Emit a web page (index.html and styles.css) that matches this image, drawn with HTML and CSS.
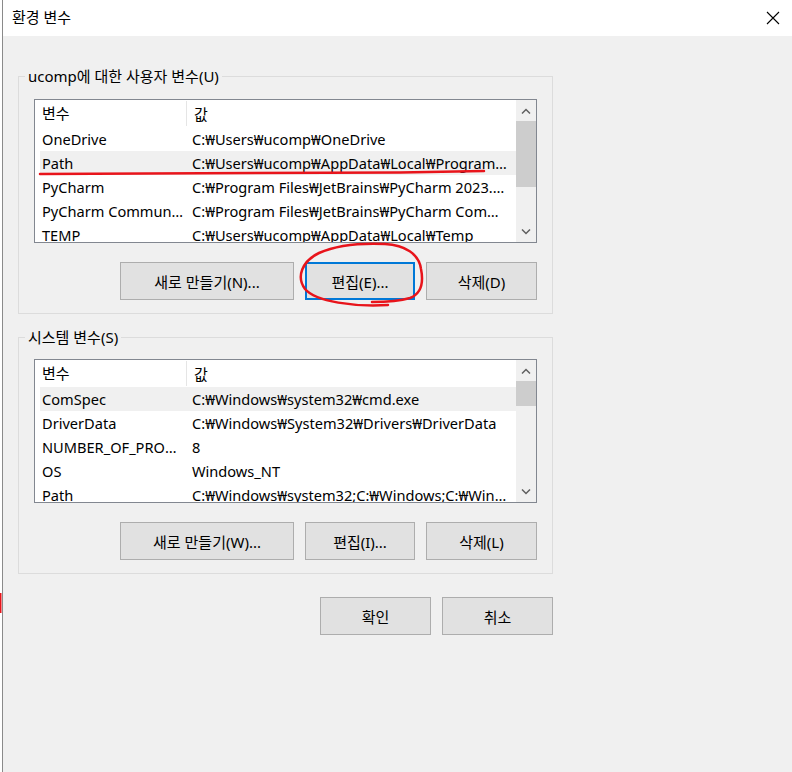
FILE: index.html
```html
<!DOCTYPE html>
<html lang="ko">
<head>
<meta charset="utf-8">
<title>환경 변수</title>
<link rel="stylesheet" href="styles.css">
</head>
<body>
<div class="window">
  <div class="titlebar">
    <span class="title">환경 변수</span>
    <svg class="close" width="14" height="14" viewBox="0 0 14 14"><path d="M1 1 L13 13 M13 1 L1 13" stroke="#000" stroke-width="1.1" fill="none"/></svg>
  </div>
  <div class="client">
    <div class="group">
      <div class="group-label">ucomp에 대한 사용자 변수(U)</div>
      <div class="list">
        <div class="list-body">
          <div class="list-head"><div class="hcell name">변수</div><div class="hcell">값</div></div>
          <div class="row"><div class="cell name">OneDrive</div><div class="cell">C:₩Users₩ucomp₩OneDrive</div></div>
          <div class="row sel"><div class="cell name">Path</div><div class="cell">C:₩Users₩ucomp₩AppData₩Local₩Programs₩Python₩Python311₩Scripts₩;C:₩Users₩ucomp</div></div>
          <div class="row"><div class="cell name">PyCharm</div><div class="cell">C:₩Program Files₩JetBrains₩PyCharm 2023.1.2₩bin;</div></div>
          <div class="row"><div class="cell name">PyCharm Community Edition</div><div class="cell">C:₩Program Files₩JetBrains₩PyCharm Community Edition 2023.1₩bin;</div></div>
          <div class="row"><div class="cell name">TEMP</div><div class="cell">C:₩Users₩ucomp₩AppData₩Local₩Temp</div></div>
        </div>
        <div class="scrollbar">
          <div class="arrow"><svg width="10" height="6" viewBox="0 0 10 6"><path d="M1 5.5 L5 1.5 L9 5.5" stroke="#606060" stroke-width="1.5" fill="none"/></svg></div>
          <div class="track"><div class="thumb thumb-user"></div></div>
          <div class="arrow"><svg width="10" height="6" viewBox="0 0 10 6"><path d="M1 0.5 L5 4.5 L9 0.5" stroke="#606060" stroke-width="1.5" fill="none"/></svg></div>
        </div>
      </div>
      <div class="buttons">
        <button class="btn wide">새로 만들기(N)...</button>
        <button class="btn focus">편집(E)...</button>
        <button class="btn">삭제(D)</button>
      </div>
    </div>

    <div class="group second">
      <div class="group-label">시스템 변수(S)</div>
      <div class="list">
        <div class="list-body">
          <div class="list-head"><div class="hcell name">변수</div><div class="hcell">값</div></div>
          <div class="row sel"><div class="cell name">ComSpec</div><div class="cell">C:₩Windows₩system32₩cmd.exe</div></div>
          <div class="row"><div class="cell name">DriverData</div><div class="cell">C:₩Windows₩System32₩Drivers₩DriverData</div></div>
          <div class="row"><div class="cell name">NUMBER_OF_PROCESSORS</div><div class="cell">8</div></div>
          <div class="row"><div class="cell name">OS</div><div class="cell">Windows_NT</div></div>
          <div class="row"><div class="cell name">Path</div><div class="cell">C:₩Windows₩system32;C:₩Windows;C:₩Windows₩System32₩Wbem;C:₩Windows₩System32</div></div>
        </div>
        <div class="scrollbar">
          <div class="arrow"><svg width="10" height="6" viewBox="0 0 10 6"><path d="M1 5.5 L5 1.5 L9 5.5" stroke="#606060" stroke-width="1.5" fill="none"/></svg></div>
          <div class="track"><div class="thumb thumb-sys"></div></div>
          <div class="arrow"><svg width="10" height="6" viewBox="0 0 10 6"><path d="M1 0.5 L5 4.5 L9 0.5" stroke="#606060" stroke-width="1.5" fill="none"/></svg></div>
        </div>
      </div>
      <div class="buttons">
        <button class="btn wide">새로 만들기(W)...</button>
        <button class="btn">편집(I)...</button>
        <button class="btn">삭제(L)</button>
      </div>
    </div>

    <div class="footer">
      <button class="btn">확인</button>
      <button class="btn">취소</button>
    </div>
  </div>
</div>

<svg class="annot" width="792" height="772" viewBox="0 0 792 772">
  <path d="M40 174 C 150 173.5 300 173 400 172.5 C 440 172 465 171.5 484 171" stroke="#e8141b" stroke-width="2.5" fill="none" stroke-linecap="round"/>
  <path d="M388 305 C 355 307 316 302 305 289 C 296 277 302 261 319 253 C 337 245 362 243 385 244 C 405 245 419 254 421 269 C 424 284 420 294 410 298 C 400 301 385 302 372 302" stroke="#e8141b" stroke-width="2.5" fill="none" stroke-linecap="round"/>
  <path d="M0.5 593 L0.5 613" stroke="#e8141b" stroke-width="2" fill="none"/>
</svg>
</body>
</html>
```

FILE: styles.css
```css
html, body {
  margin: 0;
  padding: 0;
  background: #ffffff;
}

body {
  font-family: "Noto Sans", "Noto Sans CJK KR", sans-serif;
  font-size: 15px;
  color: #000;
  width: 792px;
  height: 772px;
  overflow: hidden;
  position: relative;
}

.window {
  margin-left: 2px;
  border-left: 1px solid #8a8a8a;
  height: 772px;
  background: #f0f0f0;
  display: flex;
  flex-direction: column;
}

.titlebar {
  height: 36px;
  background: #ffffff;
  display: flex;
  align-items: center;
  justify-content: space-between;
  padding: 0 12px 0 9px;
}

.title {
  font-size: 15px;
  line-height: 20px;
  margin-top: -2px;
}

.client {
  padding: 40px 0 0 15px;
  width: 535px;
}

.group {
  border: 1px solid #dcdcdc;
  padding: 0 15px 13px 15px;
}

.group.second {
  margin-top: 23px;
}

.group-label {
  margin: -11px 0 0 -9px;
  padding: 0 3px;
  background: #f0f0f0;
  line-height: 20px;
  width: fit-content;
}

.list {
  margin-top: 13px;
  height: 142px;
  border: 1px solid #828790;
  background: #fff;
  display: flex;
}

.second .list {
  margin-top: 12px;
}

.list-body {
  flex: 1;
  overflow: hidden;
  min-width: 0;
}

.list-head {
  height: 27px;
  display: grid;
  grid-template-columns: 152px 1fr;
  align-items: center;
}

.hcell {
  padding-left: 7px;
  line-height: 20px;
  white-space: nowrap;
}

.hcell.name {
  padding-left: 7px;
  border-right: 1px solid #e5e5e5;
  height: 25px;
  line-height: 24px;
  box-sizing: border-box;
}

.row {
  margin-left: 5px;
  height: 24px;
  display: grid;
  grid-template-columns: 146px 1fr;
  align-items: center;
}

.row.sel {
  background: #f0f0f0;
}

.cell {
  padding-left: 6px;
  white-space: nowrap;
  overflow: hidden;
  text-overflow: ellipsis;
  line-height: 24px;
  min-width: 0;
  padding-right: 4px;
  font-size: 14.6px;
}

.cell.name {
  padding-left: 2px;
  padding-right: 2px;
}

.scrollbar {
  width: 20px;
  background: #f0f0f0;
  display: flex;
  flex-direction: column;
}

.arrow {
  height: 21px;
  display: flex;
  align-items: center;
  justify-content: center;
}

.track {
  flex: 1;
}

.thumb {
  background: #cdcdcd;
}

.thumb-user {
  height: 66px;
}

.thumb-sys {
  height: 25px;
}

.buttons {
  margin-top: 19px;
  display: flex;
  justify-content: flex-end;
  gap: 11px;
}

.btn {
  height: 38px;
  width: 111px;
  background: #e1e1e1;
  border: 1px solid #adadad;
  font-family: "Noto Sans", "Noto Sans CJK KR", sans-serif;
  font-size: 15px;
  color: #000;
  padding: 0;
  margin: 0;
  box-sizing: border-box;
}

.btn.wide {
  width: 174px;
}

.buttons .btn:nth-child(2) {
  width: 110px;
}

.btn.focus {
  border: 2px solid #0078d7;
}

.footer {
  margin-top: 23px;
  display: flex;
  justify-content: flex-end;
  gap: 11px;
}

.annot {
  position: absolute;
  left: 0;
  top: 0;
  pointer-events: none;
}
```
